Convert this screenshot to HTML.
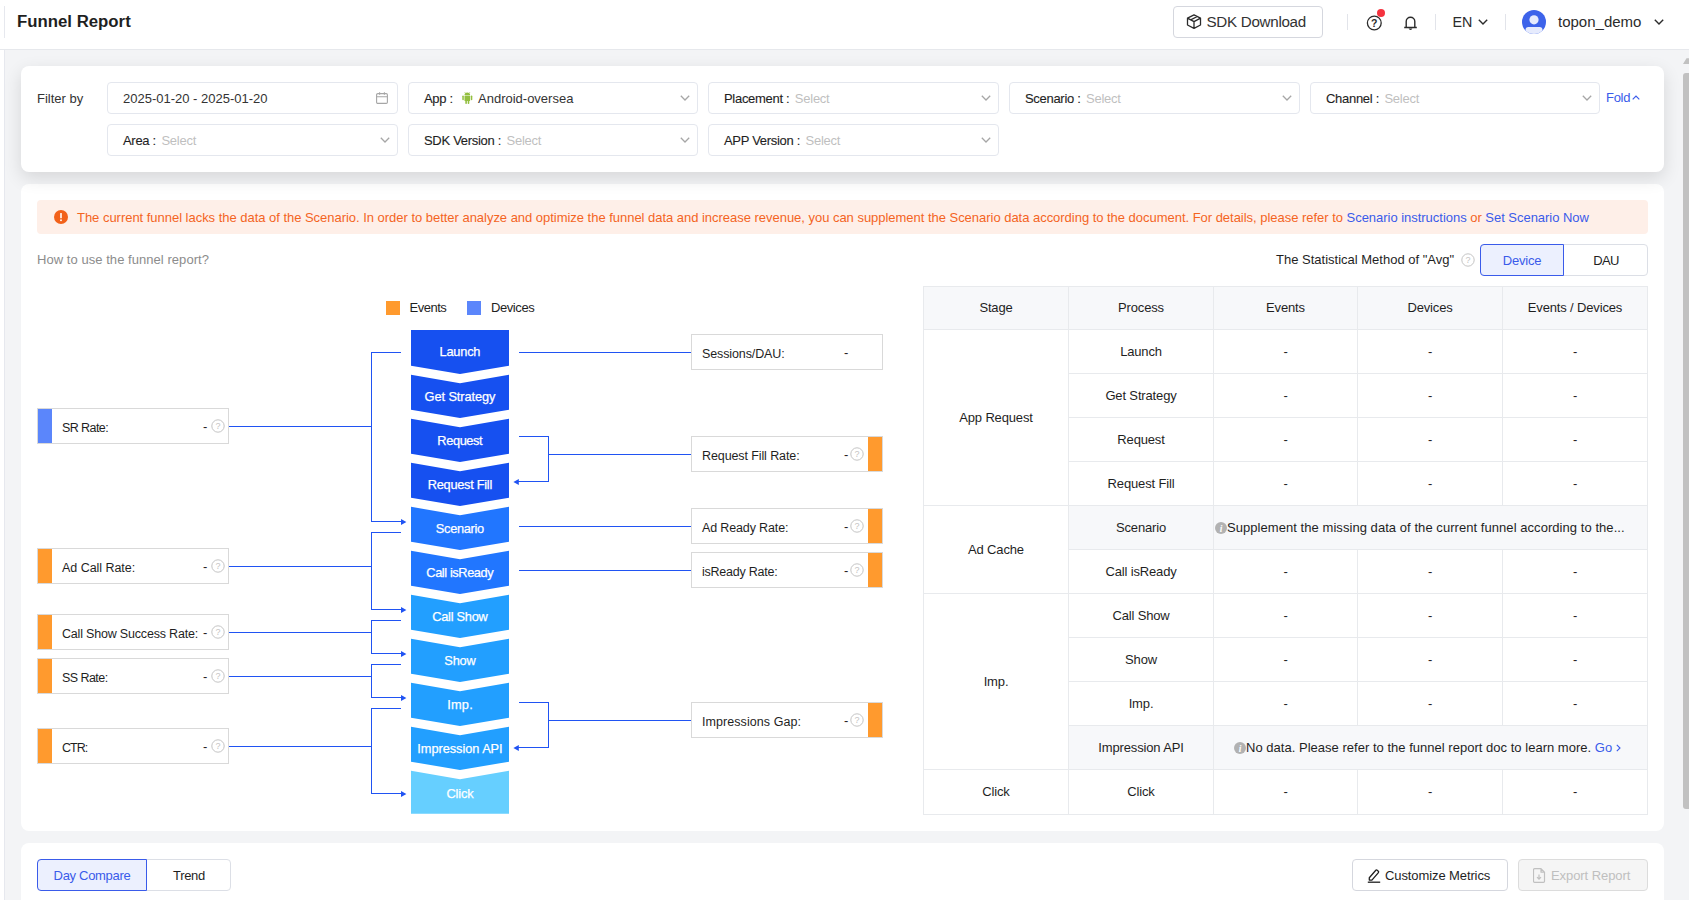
<!DOCTYPE html>
<html lang="en">
<head>
<meta charset="utf-8">
<title>Funnel Report</title>
<style>
*{box-sizing:border-box;margin:0;padding:0}
html,body{width:1689px;height:900px;overflow:hidden;background:#fff}
body{font-family:"Liberation Sans",sans-serif;font-size:13px;color:#1f1f1f;position:relative}
.abs{position:absolute}
#bg{position:absolute;left:4px;top:50px;width:1685px;height:850px;background:#f3f4f6}
#leftline{position:absolute;left:4px;top:50px;width:1px;height:850px;background:#e6e8ee}
#hdr{position:absolute;left:0;top:0;width:1689px;height:50px;background:#fff;border-bottom:1px solid #e6e8ec}
#hdr .vl{position:absolute;left:4px;top:6px;width:1px;height:32px;background:#e6e8ee}
#title{position:absolute;left:17px;top:11px;font-size:16.8px;font-weight:700;color:#1f1f1f;line-height:22px;white-space:nowrap}
.card{position:absolute;background:#fff;border-radius:8px}
#filter{left:21px;top:66px;width:1643px;height:106px;box-shadow:0 6px 18px rgba(0,0,0,.12);z-index:2}
#main{left:21px;top:184px;width:1643px;height:647px}
#bottom{left:21px;top:843px;width:1643px;height:80px}
.sel{position:absolute;height:32px;width:290.600px;border:1px solid #e4e7ee;border-radius:4px;background:#fff;line-height:32px;padding-left:15px;white-space:nowrap;font-size:13px;color:#333}
.sel b{font-weight:400;color:#1f1f1f;-webkit-text-stroke:.12px #1f1f1f;letter-spacing:-.3px}
.sel i{font-style:normal;color:#bfbfbf;margin-left:5.500px;letter-spacing:-.25px}
.sel svg.chev{position:absolute;right:7.5px;top:12px}
.sel svg.cal{position:absolute;right:9px;top:9px}
.sel svg.andr{position:absolute;left:52.500px;top:9px}
.mbox{position:absolute;width:192px;height:36px;border:1px solid #d9d9d9;background:#fff;font-size:13px;color:#1f1f1f}
.mbox .bar{position:absolute;top:0;width:14px;height:100%}
.mbox .lb{position:absolute;top:2px;line-height:34px;white-space:nowrap;font-size:12.500px}
.mbox .ds{position:absolute;top:1px;line-height:34px}
.ft{}
#tbl{position:absolute;left:923px;top:286px;width:725px;border-collapse:separate;table-layout:fixed;border-top:1px solid #e8eaed;border-left:1px solid #e8eaed;font-size:13px;color:#1f1f1f}
#tbl th,#tbl td{height:44px;border-right:1px solid #e8eaed;border-bottom:1px solid #e8eaed;text-align:center;vertical-align:middle;font-weight:400;white-space:nowrap;padding:0;background:#fff;letter-spacing:-.15px}
#tbl th{background:#f7f8fa;height:43px;padding-bottom:2px}
#tbl td.msg{text-align:left}
#tbl tr.last td{height:45px;padding-bottom:2px}
#msg1{letter-spacing:.055px}
#msg2{letter-spacing:.02px;margin-left:19px}
#tbl td.g{background:#f7f8fa}
#tbl .inf{vertical-align:-1.500px;margin-left:.5px;margin-right:.5px}
</style>
</head>
<body>
<div id="bg"></div>
<div id="leftline"></div>
<div id="hdr"><div class="vl"></div><div id="title">Funnel Report</div>
<div class="abs" id="sdk" style="left:1173px;top:6px;width:150px;height:32px;border:1px solid #d5d7de;border-radius:4px;background:#fff">
<svg class="abs" style="left:12px;top:7px" width="16" height="16" viewBox="0 0 16 16"><path d="M8 .9L14.500 4.200V11L8 14.400L1.500 11V4.200Z M1.500 4.200L8 7.600L14.500 4.200 M8 7.600V14.400 M4.700 5.900L11.300 2.500" fill="none" stroke="#2b2b2b" stroke-width="1.300" stroke-linejoin="round"/></svg>
<span class="abs" style="left:32.500px;top:0;line-height:30px;font-size:15.200px;letter-spacing:-.3px;color:#333;white-space:nowrap">SDK Download</span></div>
<div class="abs" style="left:1347px;top:14px;width:1px;height:16px;background:#e2e4ea"></div>
<svg class="abs" style="left:1366px;top:8px" width="22" height="24" viewBox="0 0 22 24"><circle cx="8.300" cy="15" r="6.900" fill="none" stroke="#2b2b2b" stroke-width="1.300"/><text x="8.300" y="18.900" font-size="10.500" font-weight="700" text-anchor="middle" fill="#2b2b2b" font-family="Liberation Sans, sans-serif">?</text><circle cx="15" cy="5" r="4" fill="#f5333f"/></svg>
<svg class="abs" style="left:1403px;top:15px" width="15" height="17" viewBox="0 0 15 17"><path d="M1.200 12.500h12.600 M3.200 12.500V6.600a4.300 4.300 0 018.600 0v5.900" fill="none" stroke="#2b2b2b" stroke-width="1.400"/><path d="M5.600 13.600a2 2 0 003.800 0z" fill="#2b2b2b"/></svg>
<div class="abs" style="left:1435px;top:14px;width:1px;height:16px;background:#e2e4ea"></div>
<span class="abs" style="left:1452.500px;top:7px;line-height:30px;font-size:14.300px;color:#2b2b2b">EN</span>
<svg class="abs" style="left:1478px;top:19px" width="10" height="6" viewBox="0 0 10 6"><path d="M.8 .8L5 5L9.200 .8" fill="none" stroke="#2b2b2b" stroke-width="1.400"/></svg>
<div class="abs" style="left:1505px;top:14px;width:1px;height:16px;background:#e2e4ea"></div>
<svg class="abs" style="left:1522px;top:10px" width="24" height="24" viewBox="0 0 24 24"><defs><clipPath id="avc"><circle cx="12" cy="12" r="12"/></clipPath></defs><circle cx="12" cy="12" r="12" fill="#3d63ea"/><g clip-path="url(#avc)" fill="#e6ebfd"><circle cx="12" cy="9.800" r="4.600"/><path d="M3.500 24V20a3 3 0 013-3h11a3 3 0 013 3v4z"/></g></svg>
<span class="abs" style="left:1558px;top:7px;line-height:30px;font-size:15px;color:#2b2b2b;white-space:nowrap">topon_demo</span>
<svg class="abs" style="left:1654px;top:19px" width="10" height="6" viewBox="0 0 10 6"><path d="M.8 .8L5 5L9.200 .8" fill="none" stroke="#2b2b2b" stroke-width="1.400"/></svg>
</div>
<div class="card" id="filter">
<div class="abs" style="left:16px;top:17px;line-height:32px;font-size:13px;color:#333">Filter by</div>
<div class="sel" style="left:86px;width:291px;top:16px">2025-01-20 - 2025-01-20<svg class="cal" width="12" height="12" viewBox="0 0 12 12"><rect x=".6" y="1.6" width="10.800" height="9.800" rx="1.2" fill="none" stroke="#a6a6a6" stroke-width="1.100"/><path d="M.6 4.800h10.800M3.600 0.300v2.400M8.400 0.300v2.400" stroke="#a6a6a6" stroke-width="1.100" fill="none"/></svg></div>
<div class="sel" style="left:387px;width:290px;top:16px"><b>App :</b><svg class="andr" width="11" height="12" viewBox="0 0 11 12"><g fill="#93bf3f"><path d="M2.500 3.100Q2.500 .6 5.300 .6Q8.100 .6 8.100 3.100z"/><path d="M3.300 1.100L2.700 .1M7.300 1.100L7.900 .1" stroke="#93bf3f" stroke-width=".6" fill="none"/><rect x="2.500" y="3.600" width="5.600" height="5.300" rx=".5"/><rect x=".3" y="3.600" width="1.500" height="4.700" rx=".7"/><rect x="8.800" y="3.600" width="1.500" height="4.700" rx=".7"/><rect x="3.300" y="8.400" width="1.600" height="3.500" rx=".7"/><rect x="5.700" y="8.400" width="1.600" height="3.500" rx=".7"/></g></svg><span style="position:absolute;left:69px;top:0">Android-oversea</span><svg class="chev" width="10" height="6" viewBox="0 0 10 6"><path d="M0.8 0.8 L5 5 L9.2 0.8" fill="none" stroke="#a6a6a6" stroke-width="1.3"/></svg></div>
<div class="sel" style="left:687px;width:291px;top:16px"><b>Placement :</b><i>Select</i><svg class="chev" width="10" height="6" viewBox="0 0 10 6"><path d="M0.8 0.8 L5 5 L9.2 0.8" fill="none" stroke="#a6a6a6" stroke-width="1.3"/></svg></div>
<div class="sel" style="left:988px;width:291px;top:16px"><b>Scenario :</b><i>Select</i><svg class="chev" width="10" height="6" viewBox="0 0 10 6"><path d="M0.8 0.8 L5 5 L9.2 0.8" fill="none" stroke="#a6a6a6" stroke-width="1.3"/></svg></div>
<div class="sel" style="left:1289px;width:290px;top:16px"><b>Channel :</b><i>Select</i><svg class="chev" width="10" height="6" viewBox="0 0 10 6"><path d="M0.8 0.8 L5 5 L9.2 0.8" fill="none" stroke="#a6a6a6" stroke-width="1.3"/></svg></div>
<div class="sel" style="left:86px;width:291px;top:58px"><b>Area :</b><i>Select</i><svg class="chev" width="10" height="6" viewBox="0 0 10 6"><path d="M0.8 0.8 L5 5 L9.2 0.8" fill="none" stroke="#a6a6a6" stroke-width="1.3"/></svg></div>
<div class="sel" style="left:387px;width:290px;top:58px"><b>SDK Version :</b><i>Select</i><svg class="chev" width="10" height="6" viewBox="0 0 10 6"><path d="M0.8 0.8 L5 5 L9.2 0.8" fill="none" stroke="#a6a6a6" stroke-width="1.3"/></svg></div>
<div class="sel" style="left:687px;width:291px;top:58px"><b>APP Version :</b><i>Select</i><svg class="chev" width="10" height="6" viewBox="0 0 10 6"><path d="M0.8 0.8 L5 5 L9.2 0.8" fill="none" stroke="#a6a6a6" stroke-width="1.3"/></svg></div>
<div class="abs" id="fold" style="left:1585px;top:16px;line-height:31px;font-size:13px;letter-spacing:-.3px;color:#3a5bea">Fold<svg width="8" height="5" viewBox="0 0 8 5" style="margin-left:2px;vertical-align:2px"><path d="M.7 4.300L4 1l3.300 3.300" fill="none" stroke="#3a5bea" stroke-width="1.200"/></svg></div>
</div>
<div class="card" id="main"></div>
<div class="card" id="bottom"></div>

<div class="abs" id="alert" style="left:37px;top:200px;width:1611px;height:34px;background:#feefe8;border-radius:4px"></div>
<svg class="abs" style="left:54px;top:210px" width="14" height="14" viewBox="0 0 14 14"><circle cx="7" cy="7" r="7" fill="#f2611a"/><rect x="6.200" y="3" width="1.600" height="5.200" rx=".5" fill="#fff"/><circle cx="7" cy="10.200" r=".95" fill="#fff"/></svg>
<div class="abs" id="alerttxt" style="left:77px;top:201px;line-height:34px;font-size:13px;letter-spacing:-.027px;color:#f4641f;white-space:nowrap">The current funnel lacks the data of the Scenario. In order to better analyze and optimize the funnel data and increase revenue, you can supplement the Scenario data according to the document. For details, please refer to <span style="color:#3a5bea">Scenario instructions</span> or <span style="color:#3a5bea">Set Scenario Now</span></div>
<div class="abs" id="howto" style="left:37px;top:250px;line-height:20px;font-size:13px;letter-spacing:.05px;color:#8c8c8c;white-space:nowrap">How to use the funnel report?</div>
<div class="abs" id="statm" style="left:1276px;top:250px;line-height:20px;font-size:13px;color:#1f1f1f;white-space:nowrap">The Statistical Method of "Avg"</div>
<svg class="abs" style="left:1461px;top:253px" width="14" height="14" viewBox="0 0 14 14"><circle cx="7" cy="7" r="6.200" fill="none" stroke="#c4c4c4" stroke-width="1"/><text x="7" y="10.300" font-size="9" text-anchor="middle" fill="#c4c4c4" font-family="Liberation Sans, sans-serif">?</text></svg>
<div class="abs" style="left:1480px;top:244px;width:168px;height:32px;border:1px solid #dcdfe6;border-radius:4px;background:#fff"></div>
<div class="abs" style="left:1480px;top:244px;width:84px;height:32px;border:1px solid #3a5bea;border-radius:4px 0 0 4px;background:#ecf0fe;color:#3a5bea;text-align:center;line-height:31px;font-size:13px;letter-spacing:-.2px" id="tgDev">Device</div>
<div class="abs" style="left:1564px;top:244px;width:84px;height:32px;color:#1f1f1f;text-align:center;line-height:33px;font-size:13px;letter-spacing:-.6px" id="tgDau">DAU</div>
<div class="abs" style="left:386px;top:301px;width:14px;height:14px;background:#ff9a2e"></div>
<div class="abs" id="lgE" style="left:409.500px;top:298px;line-height:20px;font-size:13px;letter-spacing:-.5px;color:#1f1f1f">Events</div>
<div class="abs" style="left:467px;top:301px;width:14px;height:14px;background:#5b86fb"></div>
<div class="abs" id="lgD" style="left:491px;top:298px;line-height:20px;font-size:13px;letter-spacing:-.42px;color:#1f1f1f">Devices</div>
<svg class="abs" id="funnel" style="left:30px;top:320px" width="870" height="500" viewBox="30 320 870 500" font-family="Liberation Sans, sans-serif">
<polygon points="411,330 509,330 509,365.7 460,374 411,365.7" fill="#1650f0"/>
<text x="460" y="356.2" text-anchor="middle" fill="#fff" stroke="#fff" stroke-width=".25" font-size="12.800" textLength="40.9" lengthAdjust="spacing" class="ft">Launch</text>
<polygon points="411,374.8 460,383.3 509,374.8 509,409.7 460,418 411,409.7" fill="#1650f0"/>
<text x="460" y="400.9" text-anchor="middle" fill="#fff" stroke="#fff" stroke-width=".25" font-size="12.800" textLength="70.8" lengthAdjust="spacing" class="ft">Get Strategy</text>
<polygon points="411,418.8 460,427.3 509,418.8 509,453.7 460,462 411,453.7" fill="#1650f0"/>
<text x="460" y="444.9" text-anchor="middle" fill="#fff" stroke="#fff" stroke-width=".25" font-size="12.800" textLength="45.3" lengthAdjust="spacing" class="ft">Request</text>
<polygon points="411,462.8 460,471.3 509,462.8 509,497.7 460,506 411,497.7" fill="#1650f0"/>
<text x="460" y="488.9" text-anchor="middle" fill="#fff" stroke="#fff" stroke-width=".25" font-size="12.800" textLength="64.5" lengthAdjust="spacing" class="ft">Request Fill</text>
<polygon points="411,506.8 460,515.3 509,506.8 509,541.7 460,550 411,541.7" fill="#2176ff"/>
<text x="460" y="532.9" text-anchor="middle" fill="#fff" stroke="#fff" stroke-width=".25" font-size="12.800" textLength="48.4" lengthAdjust="spacing" class="ft">Scenario</text>
<polygon points="411,550.8 460,559.3 509,550.8 509,585.7 460,594 411,585.7" fill="#2176ff"/>
<text x="460" y="576.9" text-anchor="middle" fill="#fff" stroke="#fff" stroke-width=".25" font-size="12.800" textLength="67.4" lengthAdjust="spacing" class="ft">Call isReady</text>
<polygon points="411,594.8 460,603.3 509,594.8 509,629.7 460,638 411,629.7" fill="#229fff"/>
<text x="460" y="620.9" text-anchor="middle" fill="#fff" stroke="#fff" stroke-width=".25" font-size="12.800" textLength="55.6" lengthAdjust="spacing" class="ft">Call Show</text>
<polygon points="411,638.8 460,647.3 509,638.8 509,673.7 460,682 411,673.7" fill="#229fff"/>
<text x="460" y="664.9" text-anchor="middle" fill="#fff" stroke="#fff" stroke-width=".25" font-size="12.800" textLength="31.4" lengthAdjust="spacing" class="ft">Show</text>
<polygon points="411,682.8 460,691.3 509,682.8 509,717.7 460,726 411,717.7" fill="#229fff"/>
<text x="460" y="708.9" text-anchor="middle" fill="#fff" stroke="#fff" stroke-width=".25" font-size="12.800" textLength="25.5" lengthAdjust="spacing" class="ft">Imp.</text>
<polygon points="411,726.8 460,735.3 509,726.8 509,761.7 460,770 411,761.7" fill="#229fff"/>
<text x="460" y="752.9" text-anchor="middle" fill="#fff" stroke="#fff" stroke-width=".25" font-size="12.800" textLength="85.3" lengthAdjust="spacing" class="ft">Impression API</text>
<polygon points="411,770.8 460,779.3 509,770.8 509,813.700 411,813.700" fill="#66cfff"/>
<text x="460" y="798.4" text-anchor="middle" fill="#fff" stroke="#fff" stroke-width=".25" font-size="12.800" textLength="27.1" lengthAdjust="spacing" class="ft">Click</text>
<polygon points="406.4,522.0 401.0,519.0 401.0,525.0" fill="#2053f3"/>
<polygon points="406.4,610.0 401.0,607.0 401.0,613.0" fill="#2053f3"/>
<polygon points="406.4,654.0 401.0,651.0 401.0,657.0" fill="#2053f3"/>
<polygon points="406.4,698.0 401.0,695.0 401.0,701.0" fill="#2053f3"/>
<polygon points="406.4,794.0 401.0,791.0 401.0,797.0" fill="#2053f3"/>
<polygon points="513.4,482 518.8,479 518.8,485" fill="#2053f3"/>
<polygon points="513.4,748 518.8,745 518.8,751" fill="#2053f3"/>
<g fill="none" stroke="#2053f3" stroke-width="1" shape-rendering="crispEdges"><path d="M229 426.5H371.5 M401 352.5H371.5V521.5H402"/>
<path d="M229 566.5H371.5 M401 532.5H371.5V609.5H402"/>
<path d="M229 632.5H371.5 M401 620.5H371.5V653.5H402"/>
<path d="M229 676.5H371.5 M401 664.5H371.5V697.5H402"/>
<path d="M229 746.5H371.5 M401 708.5H371.5V793.5H402"/>
<path d="M519 352.500H691"/>
<path d="M519 436.500H548.500V481.500H518 M548.500 454.500H691"/>
<path d="M519 526.500H691"/>
<path d="M519 570.500H691"/>
<path d="M519 702.500H548.500V747.500H518 M548.500 720.500H691"/>
</g>
</svg>
<div class="mbox" style="left:37px;top:408px"><div class="bar" style="left:0;background:#5b86fb"></div><span class="lb" style="left:24px;letter-spacing:-0.58px">SR Rate:</span><span class="ds" style="left:165px">-</span><svg class="abs hq" style="left:173px;top:10px" width="14" height="14" viewBox="0 0 14 14"><circle cx="7" cy="7" r="6.200" fill="none" stroke="#c4c4c4" stroke-width="1"/><text x="7" y="10.300" font-size="9" text-anchor="middle" fill="#c4c4c4" font-family="Liberation Sans, sans-serif">?</text></svg></div>
<div class="mbox" style="left:37px;top:548px"><div class="bar" style="left:0;background:#ff9a2e"></div><span class="lb" style="left:24px;letter-spacing:-0.04px">Ad Call Rate:</span><span class="ds" style="left:165px">-</span><svg class="abs hq" style="left:173px;top:10px" width="14" height="14" viewBox="0 0 14 14"><circle cx="7" cy="7" r="6.200" fill="none" stroke="#c4c4c4" stroke-width="1"/><text x="7" y="10.300" font-size="9" text-anchor="middle" fill="#c4c4c4" font-family="Liberation Sans, sans-serif">?</text></svg></div>
<div class="mbox" style="left:37px;top:614px"><div class="bar" style="left:0;background:#ff9a2e"></div><span class="lb" style="left:24px;letter-spacing:-0.19px">Call Show Success Rate:</span><span class="ds" style="left:165px">-</span><svg class="abs hq" style="left:173px;top:10px" width="14" height="14" viewBox="0 0 14 14"><circle cx="7" cy="7" r="6.200" fill="none" stroke="#c4c4c4" stroke-width="1"/><text x="7" y="10.300" font-size="9" text-anchor="middle" fill="#c4c4c4" font-family="Liberation Sans, sans-serif">?</text></svg></div>
<div class="mbox" style="left:37px;top:658px"><div class="bar" style="left:0;background:#ff9a2e"></div><span class="lb" style="left:24px;letter-spacing:-0.56px">SS Rate:</span><span class="ds" style="left:165px">-</span><svg class="abs hq" style="left:173px;top:10px" width="14" height="14" viewBox="0 0 14 14"><circle cx="7" cy="7" r="6.200" fill="none" stroke="#c4c4c4" stroke-width="1"/><text x="7" y="10.300" font-size="9" text-anchor="middle" fill="#c4c4c4" font-family="Liberation Sans, sans-serif">?</text></svg></div>
<div class="mbox" style="left:37px;top:728px"><div class="bar" style="left:0;background:#ff9a2e"></div><span class="lb" style="left:24px;letter-spacing:-1.01px">CTR:</span><span class="ds" style="left:165px">-</span><svg class="abs hq" style="left:173px;top:10px" width="14" height="14" viewBox="0 0 14 14"><circle cx="7" cy="7" r="6.200" fill="none" stroke="#c4c4c4" stroke-width="1"/><text x="7" y="10.300" font-size="9" text-anchor="middle" fill="#c4c4c4" font-family="Liberation Sans, sans-serif">?</text></svg></div>
<div class="mbox" style="left:691px;top:334px"><span class="lb" style="left:10px;letter-spacing:-0.11px">Sessions/DAU:</span><span class="ds" style="left:152px">-</span></div>
<div class="mbox" style="left:691px;top:436px"><div class="bar" style="right:0;background:#ff9a2e"></div><span class="lb" style="left:10px;letter-spacing:-0.10px">Request Fill Rate:</span><span class="ds" style="left:152px">-</span><svg class="abs hq" style="left:158px;top:10px" width="14" height="14" viewBox="0 0 14 14"><circle cx="7" cy="7" r="6.200" fill="none" stroke="#c4c4c4" stroke-width="1"/><text x="7" y="10.300" font-size="9" text-anchor="middle" fill="#c4c4c4" font-family="Liberation Sans, sans-serif">?</text></svg></div>
<div class="mbox" style="left:691px;top:508px"><div class="bar" style="right:0;background:#ff9a2e"></div><span class="lb" style="left:10px;letter-spacing:-0.14px">Ad Ready Rate:</span><span class="ds" style="left:152px">-</span><svg class="abs hq" style="left:158px;top:10px" width="14" height="14" viewBox="0 0 14 14"><circle cx="7" cy="7" r="6.200" fill="none" stroke="#c4c4c4" stroke-width="1"/><text x="7" y="10.300" font-size="9" text-anchor="middle" fill="#c4c4c4" font-family="Liberation Sans, sans-serif">?</text></svg></div>
<div class="mbox" style="left:691px;top:552px"><div class="bar" style="right:0;background:#ff9a2e"></div><span class="lb" style="left:10px;letter-spacing:-0.24px">isReady Rate:</span><span class="ds" style="left:152px">-</span><svg class="abs hq" style="left:158px;top:10px" width="14" height="14" viewBox="0 0 14 14"><circle cx="7" cy="7" r="6.200" fill="none" stroke="#c4c4c4" stroke-width="1"/><text x="7" y="10.300" font-size="9" text-anchor="middle" fill="#c4c4c4" font-family="Liberation Sans, sans-serif">?</text></svg></div>
<div class="mbox" style="left:691px;top:702px"><div class="bar" style="right:0;background:#ff9a2e"></div><span class="lb" style="left:10px;letter-spacing:0.07px">Impressions Gap:</span><span class="ds" style="left:152px">-</span><svg class="abs hq" style="left:158px;top:10px" width="14" height="14" viewBox="0 0 14 14"><circle cx="7" cy="7" r="6.200" fill="none" stroke="#c4c4c4" stroke-width="1"/><text x="7" y="10.300" font-size="9" text-anchor="middle" fill="#c4c4c4" font-family="Liberation Sans, sans-serif">?</text></svg></div>

<table id="tbl" cellspacing="0" cellpadding="0">
<colgroup><col style="width:145px"><col style="width:145px"><col style="width:144px"><col style="width:145px"><col style="width:145px"></colgroup>
<tr class="hd"><th>Stage</th><th>Process</th><th>Events</th><th>Devices</th><th>Events / Devices</th></tr>
<tr><td rowspan="4">App Request</td><td>Launch</td><td>-</td><td>-</td><td>-</td></tr>
<tr><td>Get Strategy</td><td>-</td><td>-</td><td>-</td></tr>
<tr><td>Request</td><td>-</td><td>-</td><td>-</td></tr>
<tr><td>Request Fill</td><td>-</td><td>-</td><td>-</td></tr>
<tr><td rowspan="2">Ad Cache</td><td class="g">Scenario</td><td class="g msg" colspan="3"><span id="msg1"><svg class="inf" width="12" height="12" viewBox="0 0 12 12"><circle cx="6" cy="6" r="6" fill="#b2b2b2"/><text x="6.200" y="9.600" font-size="9.500" font-weight="700" font-style="italic" text-anchor="middle" fill="#fff" font-family="Liberation Serif, serif">i</text></svg>Supplement the missing data of the current funnel according to the...</span></td></tr>
<tr><td>Call isReady</td><td>-</td><td>-</td><td>-</td></tr>
<tr><td rowspan="4">Imp.</td><td>Call Show</td><td>-</td><td>-</td><td>-</td></tr>
<tr><td>Show</td><td>-</td><td>-</td><td>-</td></tr>
<tr><td>Imp.</td><td>-</td><td>-</td><td>-</td></tr>
<tr><td class="g">Impression API</td><td class="g msg" colspan="3"><span id="msg2"><svg class="inf" width="12" height="12" viewBox="0 0 12 12"><circle cx="6" cy="6" r="6" fill="#b2b2b2"/><text x="6.200" y="9.600" font-size="9.500" font-weight="700" font-style="italic" text-anchor="middle" fill="#fff" font-family="Liberation Serif, serif">i</text></svg>No data. Please refer to the funnel report doc to learn more. <span style="color:#3a5bea">Go<svg width="5" height="8" viewBox="0 0 5 8" style="margin-left:3.500px;vertical-align:.5px"><path d="M.8 .8L4 4L.8 7.200" fill="none" stroke="#3a5bea" stroke-width="1.100"/></svg></span></span></td></tr>
<tr class="last"><td>Click</td><td>Click</td><td>-</td><td>-</td><td>-</td></tr>
</table>

<div class="abs" style="left:37px;top:859px;width:194px;height:32px;border:1px solid #dcdfe6;border-radius:4px;background:#fff"></div>
<div class="abs" id="dayc" style="left:37px;top:859px;width:110px;height:32px;border:1px solid #3a5bea;border-radius:4px 0 0 4px;background:#ecf0fe;color:#3a5bea;text-align:center;line-height:31px;font-size:13px;letter-spacing:-.3px">Day Compare</div>
<div class="abs" id="trend" style="left:147px;top:859px;width:84px;height:32px;color:#1f1f1f;text-align:center;line-height:33px;font-size:13px;letter-spacing:-.3px">Trend</div>
<div class="abs" id="cust" style="left:1352px;top:859px;width:156px;height:32px;border:1px solid #d5d7de;border-radius:4px;background:#fff">
<svg class="abs" style="left:14px;top:8px" width="14" height="15" viewBox="0 0 14 15"><path d="M2.300 9.800L8.800 2.300a1 1 0 011.400-.1l1.100 1a1 1 0 01.1 1.400L4.900 12.100H2.300z" fill="none" stroke="#1f1f1f" stroke-width="1.300" stroke-linejoin="round"/><path d="M.8 14.200h12.400" stroke="#1f1f1f" stroke-width="1.300"/></svg>
<span class="abs" style="left:32px;top:0;line-height:31px;font-size:13px;letter-spacing:-.1px;color:#1f1f1f;white-space:nowrap">Customize Metrics</span></div>
<div class="abs" id="expo" style="left:1518px;top:859px;width:130px;height:32px;border:1px solid #dcdcdc;border-radius:4px;background:#f5f5f5">
<svg class="abs" style="left:14px;top:8px" width="13" height="15" viewBox="0 0 13 15"><path d="M1.500 .7H8L11.500 4.200V13.300a1 1 0 01-1 1H1.500a1 1 0 01-1-1V1.700a1 1 0 011-1z M8 .7V4.200H11.500" fill="none" stroke="#c0c0c0" stroke-width="1.200" stroke-linejoin="round"/><path d="M6 6.500V11 M4 9.200L6 11.200L8 9.200" fill="none" stroke="#c0c0c0" stroke-width="1.200"/></svg>
<span class="abs" style="left:32px;top:0;line-height:31px;font-size:13px;letter-spacing:-.07px;color:#bfbfbf;white-space:nowrap">Export Report</span></div>


<div class="abs" id="sbar" style="left:1677px;top:50px;width:12px;height:850px;background:#f3f4f6"></div>
<div class="abs" style="left:1683px;top:73px;width:6px;height:736px;background:#c1c1c1;border-radius:3px 0 0 3px"></div>
<svg class="abs" style="left:1681px;top:58px" width="8" height="6" viewBox="0 0 8 6"><path d="M2 6L5.500 .3H8V6z" fill="#c1c1c1"/></svg>
</body>
</html>
